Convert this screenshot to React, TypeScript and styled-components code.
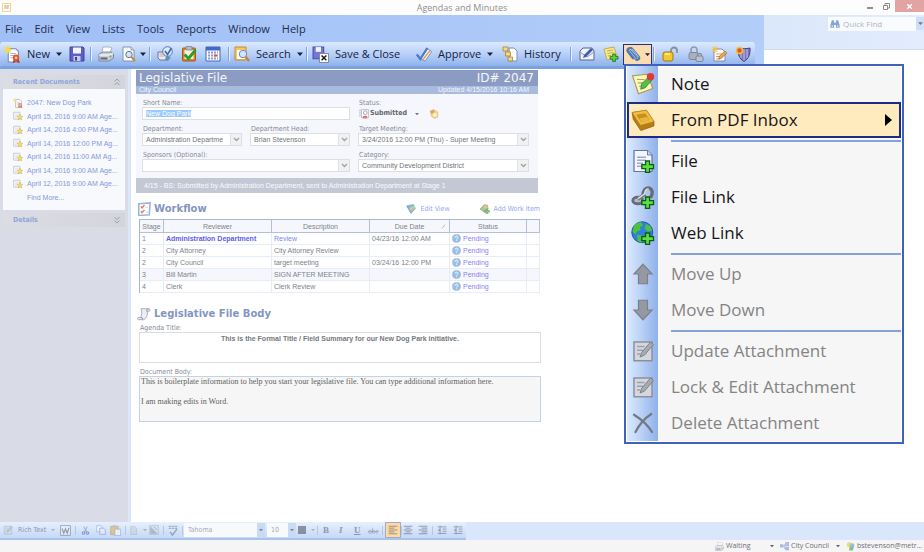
import React, { useEffect, useRef } from "react";
import styled, { createGlobalStyle, css } from "styled-components";

const ui = '"Open Sans", "Noto Sans", sans-serif';
const sans = '"Liberation Sans", Arial, sans-serif';
const wide = '"DejaVu Sans", Verdana, sans-serif';
const label = '"DejaVu Sans Condensed", "DejaVu Sans", Tahoma, sans-serif';
const serif = '"Liberation Serif", "Times New Roman", serif';

const Global = createGlobalStyle`
  *, *::before, *::after { box-sizing: border-box; }
  body { margin: 0; background: #fff; font-family: ${sans}; }
  button, input, select, textarea { font: inherit; color: inherit; margin: 0; padding: 0; border: 0; background: none; border-radius: 0; outline: none; }
  button { cursor: pointer; }
  a { text-decoration: none; color: inherit; }
  ul { list-style: none; margin: 0; padding: 0; }
  h1, h2, p { margin: 0; }
  svg { display: block; flex: none; }
`;

/* ---------- icons ---------- */

type IconProps = { size?: number };

const Svg = ({ size = 16, children }: IconProps & { children: React.ReactNode }) => (
  <svg width={size} height={size} viewBox="0 0 16 16" aria-hidden="true">
    {children}
  </svg>
);

const plus = "M9.700 8h2.700v2.400H15v2.700h-2.600v2.500H9.700v-2.500H7.200v-2.700h2.500z";

const NewIcon = ({ size }: IconProps) => (
  <Svg size={size}>
    <path d="M4 2.500h7l2.500 2.500v10H4z" fill="#fff" stroke="#7c86a8" />
    <path d="M6 7h5M6 9h5M6 11h3" stroke="#a9b5d6" />
    <path d="M3.500 0v7M0 3.500h7M1 1l5 5M6 1 1 6" stroke="#f2dc4a" strokeWidth="1.300" />
    <path d="m9.500 12-1.500 4 2.500-1 .8-.8.8.8 2.900 1-1.500-4z" fill="#b8321f" />
    <circle cx="11.300" cy="11" r="3" fill="#dd5a35" />
    <circle cx="11.300" cy="11" r="1.200" fill="#f9d09b" />
  </Svg>
);
const SaveIcon = ({ size }: IconProps) => (
  <Svg size={size}>
    <path d="M1 1h13l1 1v13H1z" fill="#5c5fc4" stroke="#40429c" />
    <path d="M4 1.500h8v6H4z" fill="#f2f4ff" />
    <path d="M4.500 10h7v5h-7z" fill="#c6cbe8" />
    <path d="M6 11h2v3.500H6z" fill="#3b3d85" />
  </Svg>
);
const PrinterIcon = ({ size }: IconProps) => (
  <Svg size={size}>
    <path d="M5 1h7l2 1-2 5H4z" fill="#fff" stroke="#98a3b5" strokeWidth=".8" />
    <path d="m1 8 4-2h8l2.500 2v4L11 15H1z" fill="#c9ced6" stroke="#6d7683" strokeWidth=".8" />
    <path d="M1 9h10l4-1.500" stroke="#fff" fill="none" />
    <path d="M2.500 11.500h7v2h-7z" fill="#5e6775" />
    <circle cx="12.500" cy="10.500" r=".9" fill="#4faf4b" />
  </Svg>
);
const PreviewIcon = ({ size }: IconProps) => (
  <Svg size={size}>
    <path d="M2 1h8l3 3v11H2z" fill="#fff" stroke="#8590ac" />
    <path d="M10 1v3h3" fill="#dde4f4" stroke="#8590ac" strokeWidth=".8" />
    <circle cx="8" cy="8.500" r="3.200" fill="#cfe6f8" stroke="#66738c" />
    <path d="m10.500 11 3.500 4" stroke="#c98a38" strokeWidth="2" />
  </Svg>
);
const HandCheckIcon = ({ size }: IconProps) => (
  <Svg size={size}>
    <path d="M1 6h9v8H3l-2-2z" fill="#e7ecf6" stroke="#66779c" />
    <path d="M2.500 8h5M2.500 10h5" stroke="#e1a06c" />
    <circle cx="10.500" cy="5.500" r="4.800" fill="#dceafb" stroke="#4e78b3" />
    <path d="m8 5 2.500 3.500L14.500 2" fill="none" stroke="#3b69aa" strokeWidth="1.600" />
    <path d="m9 10 5 1-3 4-3-1z" fill="#7189b5" />
  </Svg>
);
const ClipCheckIcon = ({ size }: IconProps) => (
  <Svg size={size}>
    <rect x="1.500" y="2" width="13" height="13" rx="1" fill="#e0832c" stroke="#a95518" />
    <path d="M3.500 4h9v9h-9z" fill="#fbf3dd" />
    <path d="M5 .5h6V4H5z" fill="#b8bcc7" stroke="#737b8d" strokeWidth=".7" />
    <path d="m3.500 8.500 4 4 7-8.500" fill="none" stroke="#27a22d" strokeWidth="3" />
  </Svg>
);
const CalendarIcon = ({ size }: IconProps) => (
  <Svg size={size}>
    <path d="M1 1h14v14H1z" fill="#fff" stroke="#4a63b5" />
    <path d="M1 1h14v3.500H1z" fill="#4468c9" />
    <path d="M3 6.500h10M3 9.500h10M3 12.500h10" stroke="#8a9ad0" strokeWidth="2" strokeDasharray="2 1" />
    <path d="M9 8.500h3v2H9z" fill="#e1502f" />
  </Svg>
);
const SearchDocIcon = ({ size }: IconProps) => (
  <Svg size={size}>
    <path d="M1 1h11v13H1z" fill="#f6c767" stroke="#c88a2e" />
    <path d="M3 4h8v9H3z" fill="#fff" />
    <circle cx="9" cy="8" r="3.700" fill="#cfe6fb" stroke="#7388ab" />
    <path d="m12 11 3 4" stroke="#c98136" strokeWidth="2.200" />
  </Svg>
);
const SaveCloseIcon = ({ size }: IconProps) => (
  <Svg size={size}>
    <path d="M1 1h10v11H1z" fill="#7477d6" stroke="#4a4ca8" />
    <path d="M3.500 1h5v4.500h-5z" fill="#f2f4ff" />
    <path d="M7 7h8.500v8.500H7z" fill="#fff" stroke="#70788c" strokeWidth=".8" />
    <path d="m9 9 4.500 4.500m0-4.500L9 13.500" stroke="#1b1b22" strokeWidth="1.400" />
  </Svg>
);
const ApproveIcon = ({ size }: IconProps) => (
  <Svg size={size}>
    <path d="m4.500 12.500 6-10.500 5.200 3.500-6.700 9.500z" fill="#f7f9ff" stroke="#6f7ca2" strokeWidth=".8" />
    <path d="m7 13.500 7-9" stroke="#d99a4e" strokeWidth="1.300" />
    <path d="m.8 8.500 3.500 4.500L11.500 2" fill="none" stroke="#4a79ce" strokeWidth="2.200" />
  </Svg>
);
const HistoryIcon = ({ size }: IconProps) => (
  <Svg size={size}>
    <path d="M7 2h5l3 3v10H8z" fill="#fff" stroke="#7f8fb8" />
    <path d="M1 1h5v4H1zM3.500 6h5v4h-5zM6 11h4.500v4H6z" fill="#f3d98a" stroke="#a9812b" strokeWidth=".8" />
  </Svg>
);
const MailPenIcon = ({ size }: IconProps) => (
  <Svg size={size}>
    <path d="m1 5 3-3h9l2 3v9H1z" fill="#eef2fb" stroke="#5b6786" />
    <path d="m1 6 7 5 7-5" fill="none" stroke="#8996b8" />
    <path d="m4 12 1-3 7-7 2 2-7 7z" fill="#3d5fb4" />
  </Svg>
);
const NoteAddIcon = ({ size }: IconProps) => (
  <Svg size={size}>
    <path d="m1 3 10-2 3 10-10 3z" fill="#f5ea87" stroke="#b9a13e" strokeWidth=".8" />
    <path d="m4 5 6-1M4.500 7.500l6-1M5 10l3-.6" stroke="#b6a75a" strokeWidth=".9" />
    <path d={plus} fill="#5ad23e" stroke="#156c13" strokeWidth=".8" />
  </Svg>
);
const ClipIcon = ({ size }: IconProps) => (
  <Svg size={size}>
    <path
      d="m3 3.500 7.500 9.500c1.500 1.800 4.500-.300 3.200-2.400L6.500 1.800C4.500-.4.300 2.300 2 5l5.500 7M5 4.500l6 7"
      fill="none" stroke="#4f77b5" strokeWidth="2.300" strokeLinecap="round"
    />
    <path d="m3.200 3.300 7.500 9.500M6.500 2l7 8.800" fill="none" stroke="#b4d0f2" strokeWidth=".9" />
  </Svg>
);
const UnlockIcon = ({ size }: IconProps) => (
  <Svg size={size}>
    <path d="M9 8V4.500a3 3 0 0 1 6 0V7" fill="none" stroke="#8b8f99" strokeWidth="1.800" />
    <rect x="1" y="6" width="10" height="9" rx="2" fill="#f3c92c" stroke="#a37a12" />
    <path d="M3 8h5" stroke="#fff3a5" strokeWidth="1.500" />
  </Svg>
);
const LocksIcon = ({ size }: IconProps) => (
  <Svg size={size}>
    <path d="M3 7V4a3 3 0 0 1 6 0v3" fill="none" stroke="#929aa8" strokeWidth="1.600" />
    <rect x="1" y="6.500" width="9" height="7" rx="2" fill="#aab1be" stroke="#7d8696" />
    <path d="M9.500 10.500v-1a2 2 0 0 1 4 0v1" fill="none" stroke="#8a92a1" strokeWidth="1.300" />
    <rect x="8" y="10" width="7" height="5.500" rx="1.300" fill="#bcc3ce" stroke="#7d8696" />
  </Svg>
);
const DocPenIcon = ({ size }: IconProps) => (
  <Svg size={size}>
    <path d="M3 3h8l3 3v9H3z" fill="#fff" stroke="#858ca6" />
    <path d="M5 8h6M5 10.500h6M5 13h4" stroke="#dd9a72" />
    <path d="m7.500 13 1-3L14 5l1.800 2-5.500 5.500z" fill="#e9a94b" stroke="#935e28" strokeWidth=".6" />
    <path d="M4 0v7M.5 3.500h7M1.500 1l5 5m0-5-5 5" stroke="#f2c238" />
  </Svg>
);
const ShieldIcon = ({ size }: IconProps) => (
  <Svg size={size}>
    <path d="M3 2c4 1 8 1 12 0 .5 6-1.500 11-6 13.500C4.500 13 2.500 8 3 2z" fill="#7b77b6" stroke="#46437f" />
    <path d="M6 3v9M9 3v11.500M12 3v9" stroke="#c3c3e6" />
    <circle cx="4.500" cy="4.500" r="3.800" fill="#f6c03a" />
    <circle cx="4.500" cy="4.500" r="2.200" fill="#e0532c" />
  </Svg>
);
const MenuNoteIcon = ({ size }: IconProps) => (
  <Svg size={size}>
    <path d="m1 2.500 10-1 3.500 9.500L5 14.500z" fill="#fdf7b9" stroke="#a39a4b" strokeWidth=".7" />
    <path d="M4 5h5M4.500 7.200h4M5.300 9.500h3" stroke="#aba66a" strokeWidth=".8" />
    <path d="m6.500 11.500.5-3.500L12 3l2.300 2-4.800 5.500z" fill="#4fc04a" stroke="#2b7c2b" strokeWidth=".5" />
    <circle cx="13" cy="3.200" r="2.500" fill="#dd3a35" />
  </Svg>
);
const InboxIcon = ({ size }: IconProps) => (
  <Svg size={size}>
    <path d="m.8 3 9.500-1.500 5 7.500v3L6.500 15 1.500 7.500z" fill="#b67d14" stroke="#8e5f0c" strokeWidth=".5" />
    <path d="m.8 3 9.500-1.500 5 7.500-9 2.500z" fill="#efc045" stroke="#b88722" strokeWidth=".4" />
    <path d="m3.500 4.500 6-1 3 4.500-5.700 1.700z" fill="#c78f1d" />
    <path d="m5.500 7 5-1.200 2 2.200-5.700 1.700z" fill="#e8b63a" />
  </Svg>
);
const FileAddIcon = ({ size }: IconProps) => (
  <Svg size={size}>
    <path d="M2 1h9l3 3v11H2z" fill="#f3f6ff" stroke="#6672a0" strokeWidth=".8" />
    <path d="M11 1v3h3" fill="#ccd6ee" stroke="#6672a0" strokeWidth=".6" />
    <path d="M4 5.500h6M4 7.500h6M4 9.500h4M4 11.500h3" stroke="#9ba9cc" strokeWidth=".9" />
    <path d={plus} fill="#5fdc44" stroke="#0f5d12" strokeWidth=".9" />
  </Svg>
);
const LinkAddIcon = ({ size }: IconProps) => (
  <Svg size={size}>
    <ellipse cx="4.500" cy="10.300" rx="3.300" ry="2.200" fill="#aebbd0" stroke="#666b74" strokeWidth="1.900" />
    <path d="M8 7c0-3 1.500-5.500 4-5s2.800 4 1 6.500" fill="none" stroke="#666b74" strokeWidth="2.200" />
    <path d="m4.500 9.500 5-3.500" stroke="#777d87" strokeWidth="2.400" />
    <path d="m4.500 9.200 5-3.500M9 6c.2-2 1.200-3.500 2.800-3.400" fill="none" stroke="#dfe3ea" strokeWidth=".9" />
    <path d={plus} fill="#5fdc44" stroke="#0f5d12" strokeWidth=".9" />
  </Svg>
);
const GlobeAddIcon = ({ size }: IconProps) => (
  <Svg size={size}>
    <circle cx="7.500" cy="7.500" r="7" fill="#2f7fe0" stroke="#1c4f9e" strokeWidth=".6" />
    <path d="M2 3c2-2 4-2.500 5-2l1 2-2 1 .5 2L4 7 3 9 1 7zM10 2l3 1.500 1 3-3 .5-2-2zM4 9l4 1 1 2-2 2.500-2.500-1z" fill="#4dc23a" />
    <path d={plus} fill="#5fdc44" stroke="#0f5d12" strokeWidth=".9" />
  </Svg>
);
const UpIcon = ({ size }: IconProps) => (
  <Svg size={size}>
    <path d="m8 1.500 6 6.500h-3v6.500H5V8H2z" fill="#9599a1" stroke="#7b818c" strokeWidth=".8" />
  </Svg>
);
const DownIcon = ({ size }: IconProps) => (
  <Svg size={size}>
    <path d="m8 14.500 6-6.500h-3V1.500H5V8H2z" fill="#9599a1" stroke="#7b818c" strokeWidth=".8" />
  </Svg>
);
const EditGrayIcon = ({ size }: IconProps) => (
  <Svg size={size}>
    <path d="M2 2h12v12.500H2z" fill="#d4d7dd" stroke="#8b919c" />
    <path d="M4 5h5M4 7.500h4M4 10h2" stroke="#9ba1ab" strokeWidth=".9" />
    <path d="m6 12 1-3 6-7 2 1.700-6 7z" fill="#a5aab3" stroke="#767c87" strokeWidth=".6" />
  </Svg>
);
const DeleteIcon = ({ size }: IconProps) => (
  <Svg size={size}>
    <path d="M2 2.500c4 2.500 9 6.500 12 11.500M13.500 2C9 5 5 10 3 14" fill="none" stroke="#747a85" strokeWidth="1.500" strokeLinecap="round" />
  </Svg>
);
const DocStarIcon = ({ size }: IconProps) => (
  <Svg size={size}>
    <path d="M1 2h10v11H1z" fill="#fff" stroke="#8d929f" />
    <path d="M3 5h6M3 8h5M3 10.500h3" stroke="#b1b6c2" />
    <path d="m11 5 1.500 3.200 3.300.4-2.500 2.300.7 3.500-3-1.800-3 1.800.7-3.500-2.500-2.300 3.300-.4z" fill="#f5d21f" stroke="#b98d1c" strokeWidth=".8" />
  </Svg>
);
const TasksIcon = ({ size }: IconProps) => (
  <Svg size={size}>
    <path d="m2 2 13-1-1 13.500-12 1z" fill="#fff" stroke="#5d90cc" strokeWidth="1.800" />
    <path d="m4.500 5 1.300 1.700L8.500 3.500M4.500 10.500l1.300 1.700L8.500 9" fill="none" stroke="#dd2c23" strokeWidth="1.600" />
    <path d="M9.500 6h3M9.500 11.500h3" stroke="#b3bccb" />
  </Svg>
);
const ScrollIcon = ({ size }: IconProps) => (
  <Svg size={size}>
    <path d="M4.500 2h9c2 0 2 3 0 3h-1.500c.5 4-2 9-4.500 9.500H2c-2 0-2-2.500 0-2.500h2c2-3 1.500-7 .5-10z" fill="#e3e5ee" stroke="#70768c" />
    <path d="M12 5c-1.500 0-1-3 1.500-3M7 14c-1-.5-1-2-3-2" fill="none" stroke="#5f667e" strokeWidth="1.300" />
  </Svg>
);
const ViewIcon = ({ size }: IconProps) => (
  <Svg size={size}>
    <path d="m1 3 11-2 3 6-7 8z" fill="#4f9adb" stroke="#2c64a1" />
    <path d="m5 7 8-5 2 4-6 5z" fill="#8bd07c" />
    <path d="m7 12 1-3 5-4 1.500 2z" fill="#ed9448" />
  </Svg>
);
const AddItemIcon = ({ size }: IconProps) => (
  <Svg size={size}>
    <path d="m0 8 7-7 5 1 1 6-6 5z" fill="#7db36b" stroke="#547b4a" />
    <circle cx="9" cy="5" r="3" fill="#e8a35f" />
    <path d={plus} fill="#48b948" stroke="#1c6a24" strokeWidth=".8" />
  </Svg>
);
const PendingIcon = ({ size }: IconProps) => (
  <Svg size={size}>
    <circle cx="8" cy="8" r="7.200" fill="#6fa5dc" stroke="#7f98b6" />
    <path d="M5.700 6.200a2.300 2.300 0 1 1 3 2.200c-.6.3-.7.700-.7 1.300M8 11.300v1.400" fill="none" stroke="#fff" strokeWidth="1.600" />
  </Svg>
);
const DocErrorIcon = ({ size }: IconProps) => (
  <Svg size={size}>
    <path d="M0 2h3M0 5h3M0 8h3M0 11h3" stroke="#8fa3d3" />
    <path d="M4 1h11v13H4z" fill="#fff" stroke="#9aa0b0" />
    <circle cx="10" cy="6" r="3" fill="none" stroke="#737a8a" />
    <path d="M6 11h7v4H6z" fill="#e0756f" />
  </Svg>
);
const TagIcon = ({ size }: IconProps) => (
  <Svg size={size}>
    <path d="M2 3 8 1l6 4v8l-5 2-5-3z" fill="#f8c93a" stroke="#d1952a" />
    <path d="m2 3 6-2 1 4-5 3z" fill="#de6b35" />
    <path d="M7 7h5v5H7z" fill="#fff2bd" />
  </Svg>
);
const BinocularsIcon = ({ size }: IconProps) => (
  <Svg size={size}>
    <path d="M3 2h3l1 4h2l1-4h3l2.500 8v4h-6V9.500h-3V14h-6v-4z" fill="#7295cf" />
    <path d="M2.500 10.500h2v2h-2zM11.500 10.500h2v2h-2z" fill="#fff" />
  </Svg>
);
const WordIcon = ({ size }: IconProps) => (
  <Svg size={size}>
    <path d="M.8.8h14.400v14.400H.8z" fill="#f4f5f8" stroke="#5d6472" strokeWidth="1.300" />
    <path d="m3 5 2.500 7L8 5.500l2.500 6.500L13 4" fill="none" stroke="#4f5563" strokeWidth="1.700" />
  </Svg>
);
const CutIcon = ({ size }: IconProps) => (
  <Svg size={size}>
    <path d="m5 1 5 10M11 1 6 11" stroke="#4d5a7a" strokeWidth="1.500" />
    <circle cx="4.500" cy="12.500" r="2.300" fill="none" stroke="#2553c0" strokeWidth="1.900" />
    <circle cx="11.500" cy="12.500" r="2.300" fill="none" stroke="#2553c0" strokeWidth="1.900" />
  </Svg>
);
const CopyIcon = ({ size }: IconProps) => (
  <Svg size={size}>
    <path d="M1 1h7l2 2v8H1z" fill="#fff" stroke="#5b7fc6" />
    <path d="M6 5h6l3 3v7H6z" fill="#e9f0ff" stroke="#3058b4" />
  </Svg>
);
const PasteIcon = ({ size }: IconProps) => (
  <Svg size={size}>
    <path d="M1 2h11v12H1z" fill="#f0a81c" stroke="#97681c" />
    <path d="M4 .5h5v3H4z" fill="#8f96a3" />
    <path d="M7 6h8.500v9.500H7z" fill="#fff" stroke="#5c74ad" />
  </Svg>
);
const PageIcon = ({ size }: IconProps) => (
  <Svg size={size}>
    <path d="M3 1h7l3.500 3.500V15H3z" fill="#c9ccd4" stroke="#8e939f" />
  </Svg>
);
const RulerIcon = ({ size }: IconProps) => (
  <Svg size={size}>
    <path d="M1 1h14v14H1z" fill="#dadde4" stroke="#858b98" />
    <path d="M2 2v12h12z" fill="#878d9a" />
    <path d="m8 3 5 5" stroke="#6d7381" strokeWidth="1.500" />
  </Svg>
);
const SpellIcon = ({ size }: IconProps) => (
  <Svg size={size}>
    <path d="M1 2h13M1 5h13" stroke="#70798d" strokeWidth="1.800" strokeDasharray="3.500 1" />
    <path d="m3 10 3.500 4.500L13 6" fill="none" stroke="#5b6b8e" strokeWidth="2.300" />
  </Svg>
);
const StrikeIcon = ({ size }: IconProps) => (
  <Svg size={size}>
    <ellipse cx="3" cy="10" rx="2" ry="2.300" fill="none" stroke="#5c6270" />
    <path d="M6.500 4v8" stroke="#5c6270" />
    <ellipse cx="8.200" cy="10" rx="1.700" ry="2.300" fill="none" stroke="#5c6270" />
    <path d="M14.500 8.500a2 2 0 1 0 0 3M0 9.500h16" fill="none" stroke="#5c6270" />
  </Svg>
);
const AlignIcon = ({ size, mode }: IconProps & { mode: "left" | "center" | "right" }) => {
  const d = {
    left: "M1 2h14M1 5h9M1 8h14M1 11h9M1 14h14",
    center: "M1 2h14M4 5h8M1 8h14M4 11h8M1 14h14",
    right: "M1 2h14M6 5h9M1 8h14M6 11h9M1 14h14",
  }[mode];
  return (
    <Svg size={size}>
      <path d={d} stroke="#4a505e" strokeWidth="1.600" />
    </Svg>
  );
};
const IndentIcon = ({ size }: IconProps) => (
  <Svg size={size}>
    <path d="M1 3h14M9 6.500h6M9 10h6M1 13.500h14M5 1v14" stroke="#5a606e" strokeWidth="1.600" />
    <path d="m1 8 4-3v6z" fill="#4b6bb0" />
  </Svg>
);
const TreeIcon = ({ size }: IconProps) => (
  <Svg size={size}>
    <path d="M0 5h5v4H0zM10 1h6v5h-6zM10 9h6v5h-6z" fill="#8da9e8" stroke="#4768c4" />
    <path d="M5 7h5M7.500 3.500v8H10" fill="none" stroke="#4768c4" />
  </Svg>
);
const UserIcon = ({ size }: IconProps) => (
  <Svg size={size}>
    <circle cx="6" cy="5" r="4.500" fill="#efc11f" />
    <circle cx="11" cy="6" r="4" fill="#4fa0dc" />
    <path d="M5 15 7 7l7 2-2 6z" fill="#3ca03a" />
  </Svg>
);
const DoubleChevron = ({ down }: { down?: boolean }) => (
  <svg width="8" height="8" viewBox="0 0 8 8" aria-hidden="true">
    <path
      d={down ? "M1.500 1 4 3.500 6.500 1M1.500 4.500 4 7l2.500-2.500" : "M1.500 3.500 4 1l2.500 2.500M1.500 7 4 4.500 6.500 7"}
      fill="none" stroke="#9a9fae" strokeWidth="1"
    />
  </svg>
);
const Caret = ({ size = 6, color = "#1a2238" }: { size?: number; color?: string }) => (
  <svg width={size} height={size} viewBox="0 0 8 8" aria-hidden="true">
    <path d="M0 2h8L4 6.500z" fill={color} />
  </svg>
);

/* ---------- window frame ---------- */

const Page = styled.div`
  min-height: 100vh;
  display: flex;
  flex-direction: column;
`;

const TitleBar = styled.div`
  display: grid;
  grid-template-columns: 64px 1fr 64px;
  height: 15px;
  background: #fdfdfd;
`;
const AppMark = styled.span`
  width: 9px;
  height: 9px;
  margin: 3px 0 0 2px;
  border: 1px solid #f6d68c;
  font: italic bold 6px/7px ${serif};
  text-align: center;
  color: #dfa66a;
`;
const Title = styled.h1`
  font: 400 9px/15px ${ui};
  color: #8f8f8f;
  text-align: center;
`;
const WindowButtons = styled.div`
  display: flex;
  justify-content: flex-end;
  height: 12px;
`;
const WindowButton = styled.button<{ $close?: boolean }>`
  display: grid;
  place-items: center;
  width: ${(p) => (p.$close ? 29 : 17)}px;
  background: ${(p) => (p.$close ? "#e2a3a3" : "transparent")};
`;

const Header = styled.header`
  display: flex;
  align-items: flex-start;
  position: relative;
  z-index: 2;
`;
const Bars = styled.div`
  flex: none;
  padding-right: 9px;
  background: linear-gradient(90deg, #a0bff6, #b2cef9);
  border-bottom: 3px solid #7ba2e0;
`;
const MenuBar = styled.nav`
  display: flex;
  gap: 12px;
  height: 27px;
  padding-left: 5px;
  font: 11px/27px ${ui};
  color: #1d2c50;
`;
const ToolBar = styled.div`
  display: flex;
  align-items: center;
  height: 24px;
  padding-left: 4px;
  border-radius: 3px 3px 4px 3px;
  background: linear-gradient(#dbe9fd, #b7d0f8 50%, #8fb3ec);
  font: 11px/20px ${ui};
  color: #16213f;
`;
const Tool = styled.button<{ $w: number; $fit?: boolean }>`
  flex: none;
  display: flex;
  align-items: center;
  gap: ${(p) => (p.$fit ? 3 : 6)}px;
  width: ${(p) => p.$w}px;
  white-space: nowrap;
`;
const Divider = styled.span<{ $w: number }>`
  flex: none;
  width: ${(p) => p.$w}px;
  height: 14px;
  border-left: 1px solid #7fa2dc;
  box-shadow: inset 1px 0 #e5effd;
`;
const DropAnchor = styled.div`
  position: relative;
  flex: none;
  align-self: stretch;
  display: flex;
  align-items: center;
  width: 30px;
`;
const ActiveTool = styled.button`
  display: flex;
  align-items: center;
  justify-content: center;
  gap: 4px;
  width: 29px;
  height: 21px;
  border: 1px solid #26307f;
  background: #fbdcae;
`;

const QuickStrip = styled.div`
  flex: 1;
  display: flex;
  align-items: flex-start;
  justify-content: flex-end;
  height: 35px;
  padding-top: 2px;
  background: linear-gradient(90deg, #dbe7fb, #e2ecfd);
  border-bottom: 1px solid #d3ddec;
`;
const QuickBox = styled.label`
  display: flex;
  align-items: center;
  gap: 3px;
  width: 88px;
  height: 14px;
  padding-left: 2px;
  background: #fff;
  opacity: 0.8;
`;
const QuickInput = styled.input`
  width: 100%;
  font: 8px/14px ${ui};
  &::placeholder {
    color: #a3a8b2;
    opacity: 1;
  }
`;
const QuickDrop = styled.button`
  display: grid;
  place-items: center;
  width: 8px;
  height: 13px;
  background: #cfdff8;
`;

/* ---------- attachment menu ---------- */

const Popup = styled.ul`
  position: absolute;
  top: 22px;
  left: 1px;
  width: 280px;
  padding: 0 1px 1px;
  border: 2px solid #3f62bb;
  background: #f6f6f6;
  box-shadow: inset 0 0 0 1px #fff;
`;
const PopupItem = styled.button<{ $hot?: boolean; $off?: boolean }>`
  display: flex;
  align-items: center;
  gap: 13px;
  width: 100%;
  height: 36px;
  font: 17px/24px ${ui};
  color: ${(p) => (p.$off ? "#848484" : "#16161c")};
  text-align: left;
  ${(p) =>
    p.$hot &&
    css`
      background: #ffebbd;
      box-shadow: inset 0 0 0 2px #1d2a86;
    `}
`;
const Gutter = styled.span<{ $plain?: boolean }>`
  flex: none;
  display: grid;
  place-items: center;
  align-self: stretch;
  width: 31px;
  background: ${(p) => (p.$plain ? "none" : "linear-gradient(90deg, #dce9fe, #b7cff6 50%, #8fb0e9)")};
`;
const PopupRule = styled.li`
  display: flex;
  height: 5px;
  &::before {
    content: "";
    width: 31px;
    background: linear-gradient(90deg, #dce9fe, #b7cff6 50%, #8fb0e9);
  }
  &::after {
    content: "";
    flex: 1;
    height: 2px;
    margin: 2px 0 0 13px;
    background: #84a3dc;
  }
`;
const SubArrow = styled.span`
  margin-left: auto;
  padding-right: 9px;
`;

/* ---------- sidebar ---------- */

const Middle = styled.div`
  flex: 1;
  display: flex;
`;
const SideBar = styled.aside`
  flex: none;
  display: flex;
  flex-direction: column;
  gap: 3px;
  width: 131px;
  padding: 6px 3px 0;
  background: #d9dbe7;
  border-right: 3px solid #dbe7f7;
`;
const PanelHead = styled.button`
  display: flex;
  align-items: center;
  justify-content: space-between;
  width: 100%;
  height: 14px;
  padding: 0 4px 0 10px;
  background: linear-gradient(90deg, #dcdde3, #d3d5da);
  font: bold 7px/14px ${label};
  color: #8ea6dc;
`;
const DocList = styled.ul`
  display: grid;
  align-content: space-between;
  min-height: 121px;
  padding: 7px 2px 6px 10px;
  background: #f7f9fc;
`;
const DocLink = styled.a`
  display: grid;
  grid-template-columns: 9px 1fr;
  gap: 5px;
  align-items: center;
  font: 7px/13px ${sans};
  color: #8499e0;
  white-space: nowrap;
  svg {
    opacity: 0.7;
  }
  span {
    grid-column: 2;
  }
`;

/* ---------- document form ---------- */

const Main = styled.main`
  flex: 1;
  min-width: 0;
  padding: 1px 5px 0;
`;
const Sheet = styled.div`
  max-width: 406px;
`;
const FileForm = styled.section`
  margin-right: 4px;
  background: #f5f7fd;
`;
const FileHead = styled.div`
  display: flex;
  justify-content: space-between;
  padding: 0 4px 0 3px;
  background: #8c9bc1;
  font: 12px/16px ${wide};
  color: #f4f6fc;
`;
const FileSub = styled.div`
  display: flex;
  justify-content: space-between;
  padding: 0 9px 0 3px;
  background: #a7bbdf;
  font: 7px/8px ${sans};
  color: #f2f6fd;
`;
const Fields = styled.div`
  display: grid;
  grid-template-columns: 1fr 1fr 171px;
  gap: 5px 8px;
  padding: 5px 9px 6px 6px;
`;
const Field = styled.div<{ $span?: number }>`
  grid-column: span ${(p) => p.$span ?? 1};
  display: flex;
  flex-direction: column;
  min-width: 0;
`;
const Label = styled.label`
  padding-left: 1px;
  font: 7px/8px ${label};
  color: #868a96;
`;
const TextInput = styled.input`
  width: 100%;
  height: 13px;
  padding: 0 3px;
  border: 1px solid #dcdee4;
  background: #fff;
  font: 7px/11px ${sans};
  color: #70747c;
  &::selection {
    background: #99c9fd;
    color: #fff;
  }
`;
const SelectShell = styled.span`
  display: grid;
  height: 13px;
  border: 1px solid #dcdee4;
  background: #fff;
  & > * {
    grid-area: 1 / 1;
  }
`;
const Select = styled.select`
  appearance: none;
  width: 100%;
  padding: 0 14px 0 3px;
  font: 7px/11px ${sans};
  color: #70747c;
`;
const SelectArrow = styled.span`
  justify-self: end;
  display: grid;
  place-items: center;
  width: 11px;
  border-left: 1px solid #dfe1e6;
  background: #f1f1f2;
  pointer-events: none;
`;
const StatusRow = styled.div`
  display: flex;
  align-items: center;
  height: 13px;
  gap: 10px;
  padding-left: 1px;
`;
const StatusButton = styled.button`
  display: flex;
  align-items: center;
  gap: 1px;
  font: bold 7px/11px ${label};
  color: #62666f;
  svg:last-child {
    margin-left: 7px;
  }
`;
const Faded = styled.span`
  display: inline-flex;
  opacity: 0.65;
`;
const Log = styled.p`
  padding: 0 8px;
  background: #c4c8d5;
  font: 7px/15px ${sans};
  color: #f9fafd;
`;

const SectionHead = styled.div`
  display: flex;
  align-items: center;
  gap: 3px;
  padding: 0 2px 0 1px;
`;
const Heading = styled.h2`
  margin-right: auto;
  font: bold 10px/16px ${wide};
  color: #8395c2;
`;
const Action = styled.button`
  display: flex;
  align-items: center;
  gap: 4px;
  margin-left: 27px;
  font: 7px/10px ${label};
  color: #94a8ec;
  svg {
    opacity: 0.7;
  }
`;
const Workflow = styled.section`
  padding-top: 8px;
`;
const Grid = styled.table`
  width: calc(100% - 5px);
  margin: 2px 2px 0 3px;
  border-collapse: separate;
  border-spacing: 0;
  table-layout: fixed;
  border: solid #aab5cf;
  border-width: 1px 0 0 1px;
  font: 7px/11px ${sans};
  color: #7e828b;
  th,
  td {
    height: 12px;
    padding: 0 0 0 2px;
    border: solid #e6edf8;
    border-width: 0 1px 1px 0;
    text-align: left;
    white-space: nowrap;
  }
  th {
    height: 13px;
    padding: 0;
    border-color: #b4bfd9;
    background: #f5f7fd;
    font-weight: 400;
    text-align: center;
  }
`;
const Row = styled.tr<{ $current?: boolean; $alt?: boolean }>`
  background: ${(p) => (p.$alt ? "#f5f7fd" : "#fff")};
  ${(p) =>
    p.$current &&
    css`
      color: #7c83f4;
      td:nth-child(2) {
        font-weight: 700;
        color: #5d5cf2;
      }
      td:nth-child(4) {
        color: #7e828b;
      }
    `}
`;
const SortHead = styled.span`
  display: grid;
  grid-template-columns: 8px 1fr 8px;
  align-items: center;
`;
const Pending = styled.a`
  display: flex;
  align-items: center;
  gap: 2px;
  color: #8d7ff2;
  svg {
    opacity: 0.7;
  }
`;

const Body = styled.section`
  display: flex;
  flex-direction: column;
  padding: 13px 1px 0 3px;
`;
const BodyHead = styled(SectionHead)`
  margin-left: -3px;
  margin-bottom: 2px;
`;
const AgendaBox = styled.textarea`
  display: block;
  width: 100%;
  height: 31px;
  padding: 1px;
  resize: none;
  border: 1px solid #dcdde0;
  font: bold 7px/9px ${sans};
  color: #74777e;
  text-align: center;
`;
const BodyLabel = styled(Label)`
  margin-top: 5px;
`;
const BodyBox = styled.textarea`
  display: block;
  width: 100%;
  height: 46px;
  padding: 0 1px;
  resize: none;
  border: 1px solid #c3d3e4;
  background: #f6f6f6;
  font: 8px/10px ${serif};
  color: #5e5e60;
`;

/* ---------- bottom bars ---------- */

const FormatStrip = styled.div`
  display: flex;
  height: 18px;
  background: #d9e6fb;
`;
const FormatBar = styled.div`
  flex: none;
  display: flex;
  align-items: center;
  padding: 0 1px 0 3px;
  background: linear-gradient(#e6effd, #c6d9f6);
  border-bottom: 2px solid #a9c3ec;
  font: 7px/12px ${label};
  color: #8f97a6;
`;
const Format = styled.button<{ $w: number; $on?: boolean; $look?: "bold" | "italic" | "underline" }>`
  flex: none;
  display: flex;
  align-items: center;
  gap: 5px;
  width: ${(p) => p.$w}px;
  white-space: nowrap;
  & > svg {
    opacity: 0.5;
  }
  ${(p) =>
    p.$on &&
    css`
      justify-content: center;
      height: 16px;
      border: 1px solid #a3a9c9;
      background: #fdd9a6;
    `}
  ${(p) =>
    p.$look &&
    css`
      font: bold 9px/12px ${serif};
      font-style: ${p.$look === "italic" ? "italic" : "normal"};
      text-decoration: ${p.$look === "underline" ? "underline" : "none"};
    `}
`;
const FormatRule = styled.span<{ $w: number }>`
  flex: none;
  width: ${(p) => p.$w}px;
  height: 9px;
  border-left: 1px solid #b3c7e8;
`;
const FontShell = styled.span<{ $w: number }>`
  display: grid;
  width: ${(p) => p.$w}px;
  height: 14px;
  margin-right: 2px;
  background: #f7f9fd;
  & > * {
    grid-area: 1 / 1;
  }
`;
const FontSelect = styled.select`
  appearance: none;
  width: 100%;
  padding-left: 4px;
  color: #a5abb6;
`;
const FontArrow = styled.span`
  justify-self: end;
  display: grid;
  place-items: center;
  width: 8px;
  background: #c9daf4;
  pointer-events: none;
`;
const StatusBar = styled.footer`
  display: flex;
  justify-content: flex-end;
  align-items: center;
  height: 12px;
  padding-right: 3px;
  background: #f5f5f5;
  font: 7px/12px ${ui};
  color: #6c6f76;
`;
const StatusItem = styled.button<{ $w: number }>`
  display: flex;
  align-items: center;
  gap: 2px;
  width: ${(p) => p.$w}px;
  white-space: nowrap;
  & > svg:first-child {
    opacity: 0.6;
  }
  & > svg:not(:first-child) {
    margin: 0 6px 0 auto;
  }
`;

/* ---------- data ---------- */

const menus = ["File", "Edit", "View", "Lists", "Tools", "Reports", "Window", "Help"];

const recent = [
  "2047: New Dog Park",
  "April 15, 2016 9:00 AM Age...",
  "April 14, 2016 4:00 PM Age...",
  "April 14, 2016 12:00 PM Ag...",
  "April 14, 2016 11:00 AM Ag...",
  "April 14, 2016 9:00 AM Age...",
  "April 12, 2016 9:00 AM Age...",
];

const steps = [
  ["1", "Administration Department", "Review", "04/23/16 12:00 AM"],
  ["2", "City Attorney", "City Attorney Review", ""],
  ["2", "City Council", "target meeting", "03/24/16 12:00 PM"],
  ["3", "Bill Martin", "SIGN AFTER MEETING", ""],
  ["4", "Clerk", "Clerk Review", ""],
];

type Entry = { text: string; icon: React.ReactNode; off?: boolean; hot?: boolean };
const attachmentMenu: Entry[][] = [
  [
    { text: "Note", icon: <MenuNoteIcon size={24} /> },
    { text: "From PDF Inbox", icon: <InboxIcon size={24} />, hot: true },
  ],
  [
    { text: "File", icon: <FileAddIcon size={24} /> },
    { text: "File Link", icon: <LinkAddIcon size={24} /> },
    { text: "Web Link", icon: <GlobeAddIcon size={24} /> },
  ],
  [
    { text: "Move Up", icon: <UpIcon size={24} />, off: true },
    { text: "Move Down", icon: <DownIcon size={24} />, off: true },
  ],
  [
    { text: "Update Attachment", icon: <EditGrayIcon size={24} />, off: true },
    { text: "Lock & Edit Attachment", icon: <EditGrayIcon size={24} />, off: true },
    { text: "Delete Attachment", icon: <DeleteIcon size={24} />, off: true },
  ],
];

const Chooser = ({ id, text, options }: { id: string; text: string; options: string[] }) => (
  <>
    <Label htmlFor={id}>{text}</Label>
    <SelectShell>
      <Select id={id}>
        {options.map((o) => (
          <option key={o}>{o}</option>
        ))}
      </Select>
      <SelectArrow>
        <svg width="7" height="5" viewBox="0 0 7 5" aria-hidden="true">
          <path d="M1 1l2.500 2.500L6 1" fill="none" stroke="#a0a3aa" strokeWidth="1.400" />
        </svg>
      </SelectArrow>
    </SelectShell>
  </>
);

const AttachmentMenu = () => (
  <Popup aria-label="Attachment">
    {attachmentMenu.map((group, g) => (
      <React.Fragment key={g}>
        {g > 0 && <PopupRule role="separator" />}
        {group.map((e) => (
          <li key={e.text}>
            <PopupItem $hot={e.hot} $off={e.off} disabled={e.off}>
              <Gutter $plain={e.hot}>{e.icon}</Gutter>
              {e.text}
              {e.hot && (
                <SubArrow>
                  <svg width="7" height="12" viewBox="0 0 7 12" aria-hidden="true">
                    <path d="M0 0v12l7-6z" fill="#000" />
                  </svg>
                </SubArrow>
              )}
            </PopupItem>
          </li>
        ))}
      </React.Fragment>
    ))}
  </Popup>
);

export default function App() {
  const nameRef = useRef<HTMLInputElement>(null);
  useEffect(() => {
    nameRef.current?.focus();
    nameRef.current?.select();
  }, []);

  return (
    <Page>
      <Global />
      <TitleBar>
        <AppMark>M</AppMark>
        <Title>Agendas and Minutes</Title>
        <WindowButtons>
          <WindowButton aria-label="Minimize">
            <svg width="6" height="6" viewBox="0 0 6 6"><path d="M0 5h6" stroke="#6b6b6b" strokeWidth="1.500" /></svg>
          </WindowButton>
          <WindowButton aria-label="Restore">
            <svg width="7" height="7" viewBox="0 0 7 7"><path d="M2 2V.5h4.500V5H5M.5 2.500h4v4h-4z" fill="none" stroke="#8b8b8b" /></svg>
          </WindowButton>
          <WindowButton $close aria-label="Close">
            <svg width="5" height="5" viewBox="0 0 5 5"><path d="m0 0 5 5M5 0 0 5" stroke="#fff" strokeWidth="1.300" /></svg>
          </WindowButton>
        </WindowButtons>
      </TitleBar>

      <Header>
        <Bars>
          <MenuBar>
            {menus.map((m) => (
              <button key={m}>{m}</button>
            ))}
          </MenuBar>
          <ToolBar role="toolbar" aria-label="Standard">
            <Tool $w={65}><NewIcon size={17} />New<Caret /></Tool>
            <Tool $w={21} aria-label="Save"><SaveIcon /></Tool>
            <Divider $w={8} />
            <Tool $w={23} aria-label="Print"><PrinterIcon /></Tool>
            <Tool $w={28} $fit aria-label="Preview"><PreviewIcon /><Caret /></Tool>
            <Divider $w={8} />
            <Tool $w={24} aria-label="Review"><HandCheckIcon /></Tool>
            <Tool $w={24} aria-label="Tasks"><ClipCheckIcon /></Tool>
            <Tool $w={23} aria-label="Calendar"><CalendarIcon /></Tool>
            <Divider $w={6} />
            <Tool $w={72}><SearchDocIcon />Search<Caret /></Tool>
            <Divider $w={6} />
            <Tool $w={104}><SaveCloseIcon size={17} />Save &amp; Close</Tool>
            <Tool $w={86}><ApproveIcon />Approve<Caret /></Tool>
            <Tool $w={68}><HistoryIcon />History</Tool>
            <Divider $w={9} />
            <Tool $w={24} aria-label="Compose"><MailPenIcon /></Tool>
            <Tool $w={20} aria-label="Add note"><NoteAddIcon /></Tool>
            <DropAnchor>
              <ActiveTool aria-label="Attachments" aria-expanded="true">
                <ClipIcon size={15} />
                <Caret size={5} />
              </ActiveTool>
              <AttachmentMenu />
            </DropAnchor>
            <Divider $w={9} />
            <Tool $w={26} aria-label="Unlock"><UnlockIcon /></Tool>
            <Tool $w={23} aria-label="Lock all"><LocksIcon /></Tool>
            <Tool $w={24} aria-label="Revise"><DocPenIcon /></Tool>
            <Tool $w={20} aria-label="Security"><ShieldIcon /></Tool>
          </ToolBar>
        </Bars>
        <QuickStrip>
          <QuickBox>
            <BinocularsIcon size={10} />
            <QuickInput placeholder="Quick Find" aria-label="Quick Find" />
          </QuickBox>
          <QuickDrop aria-label="Quick Find options"><Caret size={5} color="#6b7890" /></QuickDrop>
        </QuickStrip>
      </Header>

      <Middle>
        <SideBar>
          <div>
            <PanelHead>Recent Documents<DoubleChevron /></PanelHead>
            <DocList>
              {recent.map((r, i) => (
                <li key={r}>
                  <DocLink href="#">
                    {i === 0 ? <NewIcon size={10} /> : <DocStarIcon size={10} />}
                    <span>{r}</span>
                  </DocLink>
                </li>
              ))}
              <li>
                <DocLink href="#"><span>Find More...</span></DocLink>
              </li>
            </DocList>
          </div>
          <PanelHead>Details<DoubleChevron down /></PanelHead>
        </SideBar>

        <Main>
          <Sheet>
            <FileForm>
              <FileHead><span>Legislative File</span><span>ID# 2047</span></FileHead>
              <FileSub><span>City Council</span><span>Updated 4/15/2016 10:16 AM</span></FileSub>
              <Fields>
                <Field $span={2}>
                  <Label htmlFor="short">Short Name:</Label>
                  <TextInput id="short" ref={nameRef} defaultValue="New Dog Park" />
                </Field>
                <Field>
                  <Label as="span">Status:</Label>
                  <StatusRow>
                    <StatusButton><DocErrorIcon size={10} />Submitted<Caret size={4} color="#70747c" /></StatusButton>
                    <Faded><TagIcon size={10} /></Faded>
                  </StatusRow>
                </Field>
                <Field><Chooser id="dept" text="Department:" options={["Administration Departme"]} /></Field>
                <Field><Chooser id="head" text="Department Head:" options={["Brian Stevenson"]} /></Field>
                <Field><Chooser id="meet" text="Target Meeting:" options={["3/24/2016 12:00 PM (Thu) - Super Meeting"]} /></Field>
                <Field $span={2}><Chooser id="spon" text="Sponsors (Optional):" options={[""]} /></Field>
                <Field><Chooser id="cat" text="Category:" options={["Community Development District"]} /></Field>
              </Fields>
              <Log>4/15 - BS: Submitted by Administration Department, sent to Administration Department at Stage 1</Log>
            </FileForm>

            <Workflow>
              <SectionHead>
                <Faded><TasksIcon size={14} /></Faded>
                <Heading>Workflow</Heading>
                <Action><ViewIcon size={10} />Edit View</Action>
                <Action><AddItemIcon size={10} />Add Work Item</Action>
              </SectionHead>
              <Grid>
                <colgroup>
                  <col width="24" />
                  <col width="108" />
                  <col />
                  <col width="80" />
                  <col width="77" />
                  <col width="13" />
                </colgroup>
                <thead>
                  <tr>
                    <th>Stage</th>
                    <th>Reviewer</th>
                    <th>Description</th>
                    <th>
                      <SortHead>
                        <span />
                        Due Date
                        <svg width="5" height="5" viewBox="0 0 5 5" aria-hidden="true"><path d="M1 4.500 4 .5" stroke="#b8bfcd" /></svg>
                      </SortHead>
                    </th>
                    <th>Status</th>
                    <th aria-label="More" />
                  </tr>
                </thead>
                <tbody>
                  {steps.map((s, i) => (
                    <Row key={i} $current={i === 0} $alt={i === 3}>
                      {s.map((c, j) => (
                        <td key={j}>{c}</td>
                      ))}
                      <td><Pending href="#"><PendingIcon size={9} />Pending</Pending></td>
                      <td />
                    </Row>
                  ))}
                </tbody>
              </Grid>
            </Workflow>

            <Body>
              <BodyHead>
                <Faded><ScrollIcon size={14} /></Faded>
                <Heading>Legislative File Body</Heading>
              </BodyHead>
              <Label htmlFor="agenda">Agenda Title:</Label>
              <AgendaBox id="agenda" defaultValue="This is the Formal Title / Field Summary for our New Dog Park initiative." />
              <BodyLabel htmlFor="body">Document Body:</BodyLabel>
              <BodyBox
                id="body"
                defaultValue={"This is boilerplate information to help you start your legislative file. You can type additional information here.\n\nI am making edits in Word."}
              />
            </Body>
          </Sheet>
        </Main>
      </Middle>

      <FormatStrip>
        <FormatBar role="toolbar" aria-label="Formatting">
          <Format $w={57}><EditGrayIcon size={10} />Rich Text<Caret size={4} color="#7c8494" /></Format>
          <Format $w={15} aria-label="Word"><WordIcon size={11} /></Format>
          <FormatRule $w={6} />
          <Format $w={15} aria-label="Cut"><CutIcon size={9} /></Format>
          <Format $w={14} aria-label="Copy"><CopyIcon size={10} /></Format>
          <Format $w={15} aria-label="Paste"><PasteIcon size={11} /></Format>
          <FormatRule $w={4} />
          <Format $w={20} aria-label="Page"><PageIcon size={9} /><Caret size={4} color="#7c8494" /></Format>
          <Format $w={14} aria-label="Ruler"><RulerIcon size={10} /></Format>
          <FormatRule $w={5} />
          <Format $w={14} aria-label="Spelling"><SpellIcon size={11} /></Format>
          <FormatRule $w={2} />
          <FontShell $w={81}>
            <FontSelect aria-label="Font"><option>Tahoma</option></FontSelect>
            <FontArrow><Caret size={4} color="#7c8494" /></FontArrow>
          </FontShell>
          <FontShell $w={29}>
            <FontSelect aria-label="Size"><option>10</option></FontSelect>
            <FontArrow><Caret size={4} color="#7c8494" /></FontArrow>
          </FontShell>
          <Format $w={19} aria-label="Colour">
            <svg width="8" height="8" viewBox="0 0 8 8"><path d="M0 0h8v8H0z" fill="#3c404a" /></svg>
            <Caret size={4} color="#7c8494" />
          </Format>
          <FormatRule $w={6} />
          <Format $w={16} $look="bold">B</Format>
          <Format $w={15} $look="italic">I</Format>
          <Format $w={14} $look="underline">U</Format>
          <Format $w={14} aria-label="Strikethrough"><StrikeIcon size={11} /></Format>
          <FormatRule $w={3} />
          <Format $w={16} $on aria-label="Align left"><AlignIcon size={10} mode="left" /></Format>
          <FormatRule $w={2} />
          <Format $w={15} aria-label="Center"><AlignIcon size={10} mode="center" /></Format>
          <Format $w={14} aria-label="Align right"><AlignIcon size={10} mode="right" /></Format>
          <FormatRule $w={5} />
          <Format $w={16} aria-label="Outdent"><IndentIcon size={10} /></Format>
          <Format $w={12} aria-label="Indent"><IndentIcon size={10} /></Format>
        </FormatBar>
      </FormatStrip>
      <StatusBar>
        <StatusItem $w={65}><PrinterIcon size={9} />Waiting<Caret size={4} color="#5c6068" /></StatusItem>
        <StatusItem $w={66}><TreeIcon size={9} />City Council<Caret size={4} color="#5c6068" /></StatusItem>
        <StatusItem $w={75}><UserIcon size={9} />bstevenson@metr...</StatusItem>
      </StatusBar>
    </Page>
  );
}
